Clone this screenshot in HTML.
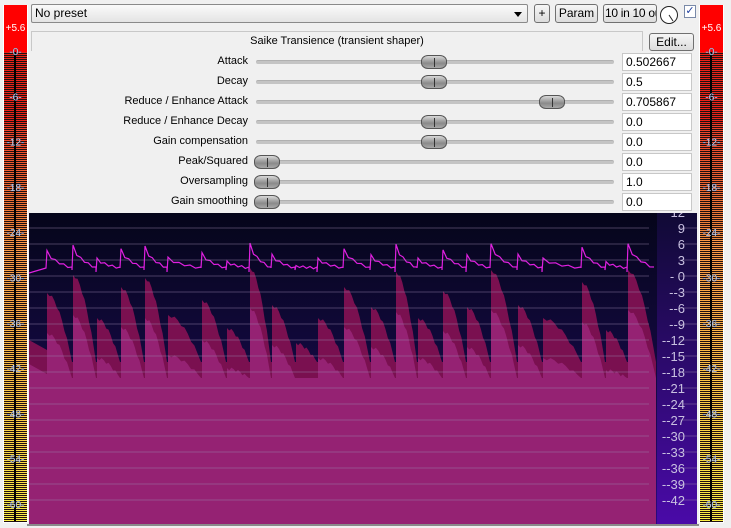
<!DOCTYPE html>
<html><head><meta charset="utf-8"><style>
*{margin:0;padding:0;box-sizing:border-box}
body{width:731px;height:528px;background:#f0f0f0;position:relative;overflow:hidden;font-family:"Liberation Sans",Arial,sans-serif;font-size:11px;color:#000}
.abs{position:absolute}
.btn{position:absolute;border:1px solid #707070;border-radius:3px;background:linear-gradient(#f6f6f6,#dcdcdc);font-size:12px;text-align:center;line-height:17px;height:19px}
.lbl{position:absolute;width:185px;text-align:right;font-size:11px}
.track{position:absolute;left:256px;width:358px;height:4px;background:#c4c4c4;border-radius:2px;border-top:1px solid #b0b0b0}
.knob{position:absolute;width:26px;height:14px;border-radius:7px/6px;background:linear-gradient(#d8d8d8,#8a8a8a 60%,#a8a8a8);border:1px solid #555}
.knob:after{content:"";position:absolute;left:12px;top:2px;width:1px;height:9px;background:#333}
.val{position:absolute;left:622px;width:70px;height:18px;background:#fff;border:1px solid #c8c8c8;font-size:12px;line-height:16px;padding-left:3px}
</style></head><body>
<svg class="abs" style="left:0;top:0" width="731" height="528" id="m"></svg>
<div class="abs" style="left:31px;top:4px;width:497px;height:19px;border:1px solid #8a8a8a;border-radius:2px;background:linear-gradient(#fafafa,#e4e4e4);font-size:12px;line-height:17px;padding-left:3px">No preset<span style="position:absolute;right:5px;top:7px;border:4px solid transparent;border-top:5px solid #000;border-bottom:0"></span></div>
<div class="btn" style="left:534px;top:4px;width:16px">+</div>
<div class="btn" style="left:555px;top:4px;width:43px">Param</div>
<div class="btn" style="left:603px;top:4px;width:54px;overflow:hidden;white-space:nowrap;text-align:left;padding-left:1px;font-size:12px;letter-spacing:-0.3px">10 in 10 ou</div>
<svg class="abs" style="left:659px;top:4px" width="22" height="22"><circle cx="10" cy="11" r="8.5" fill="#fff" stroke="#222"/><line x1="10" y1="11" x2="14" y2="17" stroke="#222"/></svg>
<div class="abs" style="left:684px;top:5px;width:12px;height:13px;border:1px solid #7a8aa8;background:#fff;color:#2040a0;font-size:11px;line-height:11px;text-align:center">✓</div>
<div class="abs" style="left:31px;top:31px;width:612px;height:20px;border:1px solid #c8c8c8;border-bottom:none;background:#f0f0f0;text-align:center;font-size:11px;line-height:18px">Saike Transience (transient shaper)</div>
<div class="btn" style="left:649px;top:33px;width:45px;height:18px;line-height:16px">Edit...</div>
<div id="rows"></div>
<div class="abs" style="left:29px;top:213px;width:668px;height:311px;overflow:hidden"><svg width="668" height="311" id="g"></svg></div>
<div class="abs" style="left:27px;top:524px;width:672px;height:2px;background:#8a8a8a"></div>
<script>
var rows=[["Attack","0.502667",434],["Decay","0.5",434],["Reduce / Enhance Attack","0.705867",552],["Reduce / Enhance Decay","0.0",434],["Gain compensation","0.0",434],["Peak/Squared","0.0",267],["Oversampling","1.0",267],["Gain smoothing","0.0",267]];
var h="";rows.forEach(function(r,i){var y=62+i*20;
h+='<div class="lbl" style="top:'+(y-7)+'px;left:63px">'+r[0]+'</div><div class="track" style="top:'+(y-2)+'px"></div><div class="knob" style="left:'+(r[2]-13)+'px;top:'+(y-7)+'px"></div><div class="val" style="top:'+(y-9)+'px">'+r[1]+'</div>';});
document.getElementById("rows").innerHTML=h;
var s="";
[3,699].forEach(function(x){
s+='<rect x="'+x+'" y="5" width="25" height="518" fill="#fff"/><rect x="'+(x+1)+'" y="5" width="23" height="47" fill="#f00"/>';
for(var y=52;y<521;y+=2){var t=(y-52)/470;var c;
if(t<0.15)c="rgb(235,35,25)";else if(t<0.4){var k=(t-0.15)/0.25;c="rgb(240,"+Math.round(60+k*80)+","+Math.round(40+k*20)+")";}
else {var k=(t-0.4)/0.6;c="rgb(250,"+Math.round(150+k*90)+","+Math.round(70+k*0)+")";}
s+='<rect x="'+(x+1)+'" y="'+y+'" width="23" height="1" fill="'+c+'"/><rect x="'+(x+1)+'" y="'+(y+1)+'" width="23" height="1" fill="#201010"/>';}
s+='<rect x="'+(x+11)+'" y="52" width="2" height="469" fill="#000"/>';
s+='<text x="'+(x+12.5)+'" y="31" font-size="10" fill="#fff" text-anchor="middle" font-family="Liberation Sans">+5.6</text>';
["0","6","12","18","24","30","36","42","48","54","60"].forEach(function(l,i){var yy=51+i*45.3;
s+='<text x="'+(x+12.5)+'" y="'+(yy+4)+'" font-size="10" fill="#fff" stroke="#4060a0" stroke-width="0.3" text-anchor="middle" font-family="Liberation Sans">-'+l+'-</text>';});
});
document.getElementById("m").innerHTML=s;
var g='<defs><linearGradient id="bg" x1="0" y1="0" x2="0" y2="1"><stop offset="0" stop-color="#05051a"/><stop offset="0.6" stop-color="#160a48"/><stop offset="1" stop-color="#2a0a80"/></linearGradient><linearGradient id="lb" x1="0" y1="0" x2="0" y2="1"><stop offset="0" stop-color="#100a35"/><stop offset="1" stop-color="#4a0aa8"/></linearGradient></defs>';
g+='<rect width="668" height="311" fill="url(#bg)"/><rect x="628" width="40" height="311" fill="url(#lb)"/>';
var pk=[[47,293],[73,275],[97,318],[121,287],[145,278],[168,315],[202,300],[227,328],[250,268],[272,305],[296,343],[318,318],[344,287],[371,307],[396,272],[418,318],[443,291],[467,307],[491,270],[518,305],[543,318],[582,282],[606,330],[628,270]];
function wave(off,base){var p="0,311 0,"+(340+off*0.6-213)+" 18,"+(350+off*0.6-213)+" ";
pk.forEach(function(q,i){var nx=i+1<pk.length?pk[i+1][0]:657;var py=q[1]+off;
p+=(q[0]-29)+","+(base-213)+" "+(q[0]-29)+","+(py-213)+" ";
var n=10;for(var j=1;j<=n;j++){var xx=q[0]+(nx-1-q[0])*j/n;var yy=py+(base-py)*Math.pow(j/n,1.8)+((j%3==1)?2:(j%3==2?-1:0));if(yy>base)yy=base;p+=(xx-29).toFixed(1)+","+(yy-213).toFixed(1)+" ";}});
p+="627,311";return p;}
g+='<polygon points="'+wave(0,362)+'" fill="#7a1050"/>';
g+='<polygon points="'+wave(40,378)+'" fill="#952273"/>';
g+='<rect x="0" y="165" width="627" height="146" fill="#952273"/>';
var lp="0,60 ";pk.forEach(function(q,i){var nx=i+1<pk.length?pk[i+1][0]:655;var py=243+(q[1]-268)*0.3;
lp+=(q[0]-30)+","+(57+((i%3)-1)*2)+" "+(q[0]-29)+","+(py-213).toFixed(1)+" ";
for(var j=1;j<=6;j++){var xx=q[0]+(nx-1-q[0])*j/6;var yy=py+(268-py)*Math.sqrt(j/6)+((j%2)?1:-1);lp+=(xx-29).toFixed(1)+","+(yy-213).toFixed(1)+" ";}});
g+='<polyline points="'+lp+'" fill="none" stroke="#e020e0" stroke-width="1.2"/>';
for(var v=12;v>=-42;v-=3){var y=63-v/3*16;
g+='<line x1="0" x2="620" y1="'+y+'" y2="'+y+'" stroke="rgba(150,130,170,0.45)"/>';
g+='<line x1="650" x2="668" y1="'+y+'" y2="'+y+'" stroke="rgba(150,130,170,0.45)"/>';
var t=v>0?""+v:(v==0?"- 0":"--"+(-v));
g+='<text x="656" y="'+(y+5)+'" font-size="13" fill="#c8c0e0" text-anchor="end" font-family="Liberation Sans">'+t+'</text>';}
document.getElementById("g").innerHTML=g;
</script>
</body></html>
